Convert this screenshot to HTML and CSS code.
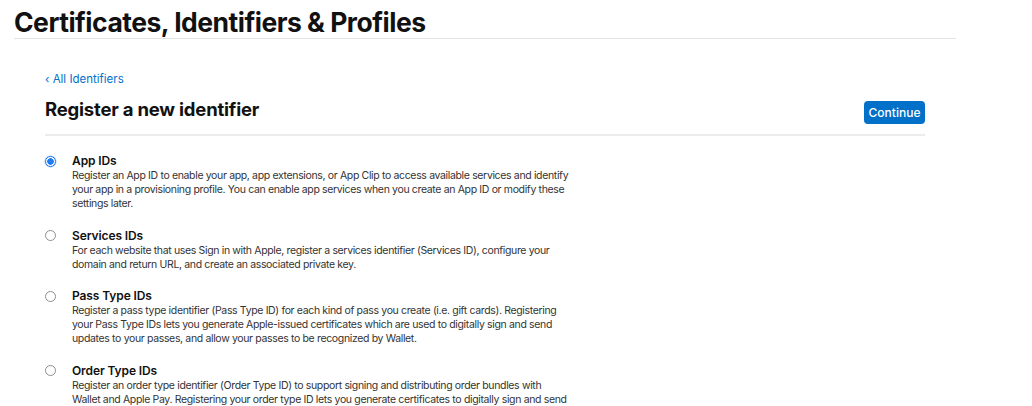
FILE: index.html
```html
<!DOCTYPE html>
<html>
<head>
<meta charset="utf-8">
<link rel="stylesheet" href="styles.css">
</head>
<body>
<header class="page-header">
  <h1 class="page-title">Certificates, Identifiers &amp; Profiles</h1>
</header>
<main class="content">
  <a class="back-link" href="#">‹ All Identifiers</a>
  <div class="section-head">
    <h2 class="section-title">Register a new identifier</h2>
    <button class="btn-primary">Continue</button>
  </div>
  <ul class="options">
    <li class="option">
      <span class="radio checked"></span>
      <div class="option-body">
        <div class="option-title">App IDs</div>
        <p class="option-desc">Register an App ID to enable your app, app extensions, or App Clip to access available services and identify your app in a provisioning profile. You can enable app services when you create an App ID or modify these settings later.</p>
      </div>
    </li>
    <li class="option">
      <span class="radio"></span>
      <div class="option-body">
        <div class="option-title">Services IDs</div>
        <p class="option-desc">For each website that uses Sign in with Apple, register a services identifier (Services ID), configure your domain and return URL, and create an associated private key.</p>
      </div>
    </li>
    <li class="option">
      <span class="radio"></span>
      <div class="option-body">
        <div class="option-title">Pass Type IDs</div>
        <p class="option-desc">Register a pass type identifier (Pass Type ID) for each kind of pass you create (i.e. gift cards). Registering your Pass Type IDs lets you generate Apple-issued certificates which are used to digitally sign and send updates to your passes, and allow your passes to be recognized by Wallet.</p>
      </div>
    </li>
    <li class="option">
      <span class="radio"></span>
      <div class="option-body">
        <div class="option-title">Order Type IDs</div>
        <p class="option-desc">Register an order type identifier (Order Type ID) to support signing and distributing order bundles with Wallet and Apple Pay. Registering your order type ID lets you generate certificates to digitally sign and send updates to your orders.</p>
      </div>
    </li>
  </ul>
</main>
</body>
</html>
```

FILE: styles.css
```css
* { box-sizing: border-box; }
html, body { margin: 0; padding: 0; background: #fff; }
body {
  font-family: Inter, "Noto Sans", "Liberation Sans", sans-serif;
  color: #1d1d1f;
  overflow: hidden;
  height: 406px;
}
.page-header {
  margin-left: 14px;
  width: 942px;
  border-bottom: 1px solid #e3e3e3;
  padding-top: 6px;
  height: 39px;
}
.page-title {
  margin: 0;
  font-size: 26.5px;
  font-weight: 700;
  letter-spacing: -0.5px;
  line-height: 32px;
  color: #111;
}
.content {
  margin-left: 45px;
  width: 880px;
  padding-top: 33px;
}
.back-link {
  display: block;
  font-size: 11.5px;
  line-height: 14px;
  color: #0070c9;
  text-decoration: none;
}
.section-head {
  display: flex;
  justify-content: space-between;
  align-items: flex-start;
  border-bottom: 2px solid #ececec;
  padding-top: 11px;
  padding-bottom: 10px;
}
.section-title {
  margin: 0;
  font-size: 18.5px;
  font-weight: 700;
  letter-spacing: -0.2px;
  line-height: 24px;
  color: #111;
}
.btn-primary {
  width: 61px;
  height: 23px;
  margin-top: 4px;
  background: #0070c9;
  color: #fff;
  border: 0;
  border-radius: 4px;
  font-family: inherit;
  font-size: 12px;
  font-weight: 500;
  padding: 0;
}
.options {
  list-style: none;
  margin: 0;
  padding: 17px 0 0;
}
.option {
  display: flex;
  gap: 16px;
  margin-bottom: 16.5px;
}
.radio {
  flex: none;
  width: 11px;
  height: 11px;
  border-radius: 50%;
  border: 1px solid #8e8e8e;
  margin-top: 2.5px;
  background: #fff;
}
.radio.checked {
  border: 1px solid #1a73e8;
  background: radial-gradient(circle, #1f7cf0 0 3px, #fff 3.5px);
  box-shadow: 0 0 0 0.5px #9cc3f5;
}
.option-body { width: 500px; }
.option-title {
  font-size: 12px;
  font-weight: 600;
  letter-spacing: -0.1px;
  line-height: 16px;
  color: #111;
}
.option-desc {
  margin: 0;
  font-size: 10.5px;
  letter-spacing: -0.35px;
  line-height: 14px;
  color: #333;
}
```
